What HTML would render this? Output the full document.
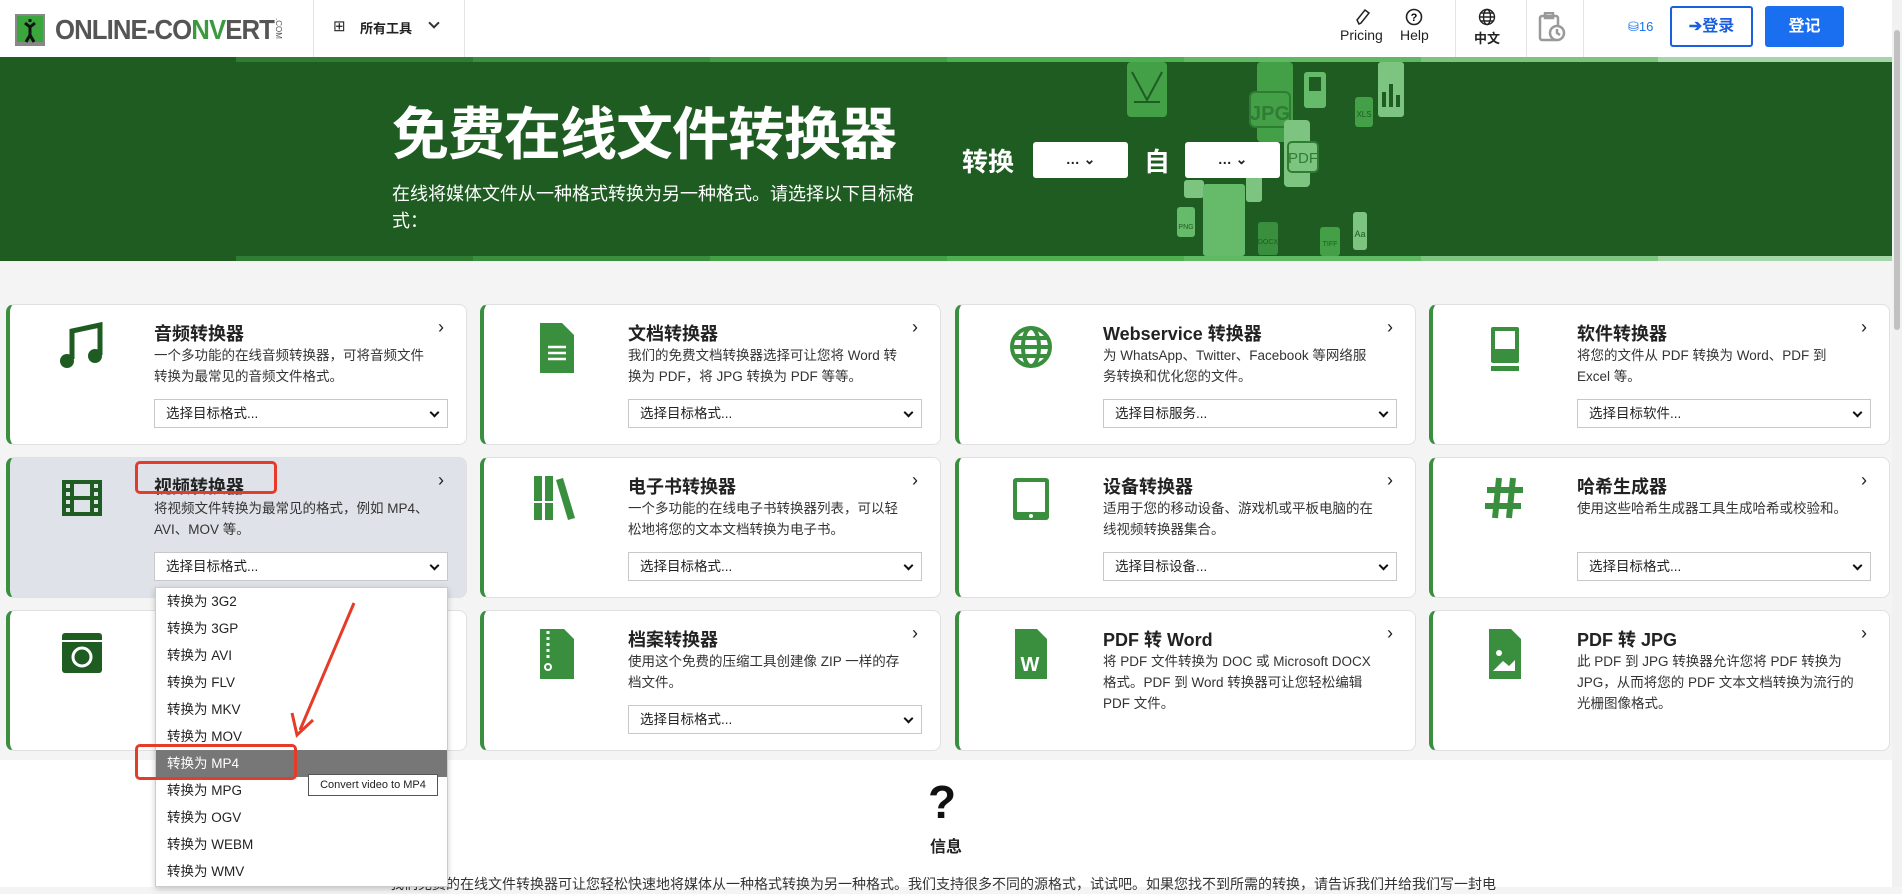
<!DOCTYPE html>
<html><head><meta charset="utf-8"><style>
*{margin:0;padding:0;box-sizing:border-box}
body{width:1902px;height:887px;overflow:hidden;background:#f4f4f4;font-family:"Liberation Sans","Noto Sans CJK SC",sans-serif;position:relative;color:#222}
.a{position:absolute}
.hdr{left:0;top:0;width:1892px;height:57px;background:#fff}
.sep{top:0;width:1px;height:57px;background:#e4e4e4}
.ban{left:0;top:57px;width:1892px;height:204px;background:#1e5c22;overflow:hidden}
.card{position:absolute;width:461px;height:141px;background:#fff;border:1px solid #e0e0e0;border-left:4px solid #3a8f3e;border-radius:8px}
.card h3{position:absolute;left:144px;top:15px;font-size:18px;font-weight:bold;color:#222;white-space:nowrap}
.card p{position:absolute;left:144px;top:40px;font-size:13.5px;line-height:21px;color:#333;white-space:nowrap}
.card .chev{position:absolute;right:22px;top:12px;font-size:18px;color:#222}
.sel{position:absolute;left:144px;top:94px;width:294px;height:29px;background:#fff;border:1px solid #c8c8c8;font-size:13.5px;line-height:27px;padding-left:11px;color:#222}
.sel:after{content:"";position:absolute;right:9px;top:9px;width:5px;height:5px;border-right:2px solid #111;border-bottom:2px solid #111;transform:rotate(45deg)}
.ic{position:absolute;left:44px;top:14px;width:56px;height:56px}
.dd{left:155px;top:587px;width:293px;height:300px;background:#fff;border:1px solid #ccc;box-shadow:0 2px 6px rgba(0,0,0,.2)}
.dd div{height:27px;line-height:27px;padding-left:11px;font-size:13.5px;color:#222}
.red{border:3px solid #e53c2a;border-radius:5px}
</style></head><body>
<div class="a hdr"></div>
<svg class="a" style="left:15px;top:14px" width="30" height="32"><rect width="30" height="32" fill="#888"/><rect x="2" y="2" width="26" height="26" fill="#3ba63e"/><path d="M15 5v3M10 9l5 4 5-4M15 13v8l-4 7M15 21l4 7" stroke="#111" stroke-width="3" fill="none"/></svg>
<div class="a" style="left:55px;top:14px;font-size:28px;font-weight:bold;color:#555;letter-spacing:-1px;transform:scaleX(.92);transform-origin:left;white-space:nowrap">ONLINE-CO<span style="color:#3a9a3e">NV</span>ERT</div>
<div class="a" style="left:268px;top:24px;font-size:8px;color:#555;transform:rotate(90deg)">.COM</div>
<div class="a sep" style="left:313px"></div><div class="a sep" style="left:464px"></div>
<div class="a" style="left:333px;top:17px;font-size:15px;color:#222">⊞</div>
<div class="a" style="left:360px;top:18px;font-size:13px;font-weight:bold">所有工具</div>
<div class="a" style="left:430px;top:19px;width:8px;height:8px;border-right:2px solid #333;border-bottom:2px solid #333;transform:rotate(45deg)"></div>
<svg class="a" style="left:1355px;top:8px" width="16" height="18"><path d="M4 16l-2-4 8-10 4 3-8 10z" fill="none" stroke="#222" stroke-width="1.5"/></svg>
<div class="a" style="left:1340px;top:27px;font-size:14px">Pricing</div>
<svg class="a" style="left:1405px;top:8px" width="18" height="18"><circle cx="9" cy="9" r="7.5" fill="none" stroke="#222" stroke-width="1.6"/><text x="9" y="13" font-size="11" text-anchor="middle" font-family="Liberation Sans" font-weight="bold">?</text></svg>
<div class="a" style="left:1400px;top:27px;font-size:14px">Help</div>
<div class="a sep" style="left:1455px"></div>
<svg class="a" style="left:1478px;top:8px" width="18" height="18" fill="none" stroke="#222" stroke-width="1.4"><circle cx="9" cy="9" r="7.5"/><ellipse cx="9" cy="9" rx="3.5" ry="7.5"/><path d="M1.5 9h15M3 5h12M3 13h12"/></svg>
<div class="a" style="left:1474px;top:28px;font-size:13px;font-weight:bold">中文</div>
<div class="a sep" style="left:1526px"></div>
<svg class="a" style="left:1538px;top:12px" width="28" height="30" fill="none" stroke="#999" stroke-width="2.5"><rect x="2" y="4" width="18" height="24" rx="2"/><rect x="7" y="1" width="8" height="5"/><circle cx="19" cy="21" r="7" fill="#fff"/><path d="M19 17v4l3 2"/></svg>
<div class="a sep" style="left:1583px"></div>
<div class="a" style="left:1628px;top:19px;font-size:13px;color:#1a73e8">⛁16</div>
<div class="a" style="left:1670px;top:6px;width:83px;height:41px;border:2px solid #1a5fe0;border-radius:3px;color:#1a5fe0;font-size:16px;font-weight:bold;text-align:center;line-height:37px">➔登录</div>
<div class="a" style="left:1765px;top:6px;width:79px;height:41px;background:#1a6ef0;border-radius:3px;color:#fff;font-size:16px;font-weight:bold;text-align:center;line-height:41px">登记</div>
<div class="a" style="left:1892px;top:0;width:10px;height:887px;background:#f1f1f1"></div>
<div class="a" style="left:1894px;top:30px;width:6px;height:300px;background:#c1c1c1;border-radius:3px"></div>

<div class="a ban">
<div class="a" style="left:236px;top:0;width:237px;height:5px;background:#2f7d33"></div>
<div class="a" style="left:473px;top:0;width:237px;height:5px;background:#3a8f3e"></div>
<div class="a" style="left:710px;top:0;width:237px;height:5px;background:#43a047"></div>
<div class="a" style="left:947px;top:0;width:237px;height:5px;background:#4caf50"></div>
<div class="a" style="left:1184px;top:0;width:237px;height:5px;background:#5fb862"></div>
<div class="a" style="left:1421px;top:0;width:237px;height:5px;background:#7cc47f"></div>
<div class="a" style="left:1658px;top:0;width:234px;height:5px;background:#a5d6a7"></div>
<div class="a" style="left:236px;top:199px;width:237px;height:5px;background:#2f7d33"></div>
<div class="a" style="left:473px;top:199px;width:237px;height:5px;background:#3a8f3e"></div>
<div class="a" style="left:710px;top:199px;width:237px;height:5px;background:#43a047"></div>
<div class="a" style="left:947px;top:199px;width:237px;height:5px;background:#4caf50"></div>
<div class="a" style="left:1184px;top:199px;width:237px;height:5px;background:#5fb862"></div>
<div class="a" style="left:1421px;top:199px;width:237px;height:5px;background:#7cc47f"></div>
<div class="a" style="left:1658px;top:199px;width:234px;height:5px;background:#a5d6a7"></div>
<svg class="a" style="left:1110px;top:5px" width="340" height="194">
<rect x="17" y="0" width="40" height="55" rx="4" fill="#43a047"/><path d="M22 10l15 28 15-28M24 40h26" stroke="#1e5c22" stroke-width="2" fill="none"/>
<rect x="147" y="0" width="36" height="80" rx="4" fill="#43a047"/>
<rect x="140" y="30" width="40" height="35" rx="5" fill="#43a047" stroke="#2f7d33" stroke-width="2"/><text x="160" y="58" font-size="20" text-anchor="middle" fill="#2f7d33" font-family="Liberation Sans" font-weight="bold">JPG</text>
<rect x="194" y="10" width="22" height="36" rx="3" fill="#66bb6a"/><rect x="199" y="15" width="12" height="14" fill="#1e5c22"/>
<rect x="245" y="35" width="18" height="30" rx="3" fill="#43a047"/><text x="254" y="55" font-size="8" text-anchor="middle" fill="#1e5c22">XLS</text>
<rect x="268" y="0" width="26" height="55" rx="3" fill="#7cc47f"/><rect x="272" y="30" width="4" height="15" fill="#1e5c22"/><rect x="279" y="22" width="4" height="23" fill="#1e5c22"/><rect x="286" y="33" width="4" height="12" fill="#1e5c22"/>
<rect x="174" y="58" width="26" height="67" rx="4" fill="#7cc47f"/><rect x="178" y="80" width="30" height="30" rx="4" fill="#7cc47f" stroke="#2f7d33" stroke-width="2"/><text x="193" y="101" font-size="15" text-anchor="middle" fill="#2f7d33">PDF</text>
<rect x="136" y="107" width="16" height="33" rx="3" fill="#7cc47f"/>
<rect x="74" y="118" width="20" height="18" rx="3" fill="#7cc47f"/>
<rect x="93" y="122" width="42" height="72" rx="3" fill="#66bb6a"/>
<rect x="67" y="145" width="18" height="30" rx="3" fill="#66bb6a"/><text x="76" y="167" font-size="7" text-anchor="middle" fill="#1e5c22">PNG</text>
<rect x="148" y="160" width="20" height="33" rx="3" fill="#3a8f3e"/><text x="158" y="182" font-size="7" text-anchor="middle" fill="#1e5c22">DOCX</text>
<rect x="210" y="165" width="20" height="29" rx="3" fill="#43a047"/><text x="220" y="184" font-size="7" text-anchor="middle" fill="#1e5c22">TIFF</text>
<rect x="243" y="150" width="14" height="38" rx="3" fill="#7cc47f"/><text x="250" y="175" font-size="9" text-anchor="middle" fill="#1e5c22">Aa</text>
</svg>
<div class="a" style="left:392px;top:32px;font-size:57px;font-weight:bold;color:#fff;white-space:nowrap;letter-spacing:-1px">免费在线文件转换器</div>
<div class="a" style="left:392px;top:124px;width:524px;font-size:18px;line-height:27px;color:#fff">在线将媒体文件从一种格式转换为另一种格式。请选择以下目标格式：</div>
<div class="a" style="left:962px;top:85px;font-size:26px;font-weight:bold;color:#fff">转换</div>
<div class="a" style="left:1033px;top:85px;width:95px;height:36px;background:#fff;border-radius:3px;font-size:14px;text-align:center;line-height:34px;font-weight:bold">… ⌄</div>
<div class="a" style="left:1144px;top:85px;font-size:26px;font-weight:bold;color:#fff">自</div>
<div class="a" style="left:1185px;top:85px;width:95px;height:36px;background:#fff;border-radius:3px;font-size:14px;text-align:center;line-height:34px;font-weight:bold">… ⌄</div>
</div>

<!-- row 1 -->
<div class="card" style="left:6px;top:304px"><svg class="ic" viewBox="0 0 56 56"><path d="M18 40V12l28-6v30" stroke="#1e5c22" stroke-width="5" fill="none"/><circle cx="13" cy="42" r="7" fill="#1e5c22"/><circle cx="41" cy="37" r="7" fill="#1e5c22"/></svg><h3>音频转换器</h3><span class="chev">›</span><p>一个多功能的在线音频转换器，可将音频文件<br>转换为最常见的音频文件格式。</p><div class="sel">选择目标格式...</div></div>
<div class="card" style="left:480px;top:304px"><svg class="ic" viewBox="0 0 56 56"><path d="M12 4h22l12 12v38H12z" fill="#3a8f3e"/><path d="M20 28h18M20 34h18M20 40h18" stroke="#fff" stroke-width="2.5"/></svg><h3>文档转换器</h3><span class="chev">›</span><p>我们的免费文档转换器选择可让您将 Word 转<br>换为 PDF，将 JPG 转换为 PDF 等等。</p><div class="sel">选择目标格式...</div></div>
<div class="card" style="left:955px;top:304px"><svg class="ic" viewBox="0 0 56 56" fill="none" stroke="#3a8f3e" stroke-width="4"><circle cx="28" cy="28" r="19"/><ellipse cx="28" cy="28" rx="8" ry="19"/><path d="M9 28h38M12 19h32M12 37h32"/></svg><h3>Webservice 转换器</h3><span class="chev">›</span><p>为 WhatsApp、Twitter、Facebook 等网络服<br>务转换和优化您的文件。</p><div class="sel">选择目标服务...</div></div>
<div class="card" style="left:1429px;top:304px"><svg class="ic" viewBox="0 0 56 56"><rect x="14" y="8" width="28" height="36" rx="2" fill="#3a8f3e"/><rect x="18" y="12" width="20" height="18" fill="#fff"/><rect x="14" y="47" width="28" height="5" fill="#3a8f3e"/></svg><h3>软件转换器</h3><span class="chev">›</span><p>将您的文件从 PDF 转换为 Word、PDF 到<br>Excel 等。</p><div class="sel">选择目标软件...</div></div>
<!-- row 2 -->
<div class="card" style="left:6px;top:457px;background:#dfe2e8"><svg class="ic" viewBox="0 0 56 56"><rect x="10" y="10" width="36" height="32" fill="none" stroke="#1e5c22" stroke-width="4"/><path d="M18 10v32M38 10v32M10 26h36M10 18h8M10 34h8M38 18h8M38 34h8" stroke="#1e5c22" stroke-width="4"/></svg><h3>视频转换器</h3><span class="chev">›</span><p>将视频文件转换为最常见的格式，例如 MP4、<br>AVI、MOV 等。</p><div class="sel">选择目标格式...</div></div>
<div class="card" style="left:480px;top:457px"><svg class="ic" viewBox="0 0 56 56"><rect x="6" y="4" width="8" height="44" fill="#3a8f3e"/><rect x="17" y="4" width="8" height="44" fill="#3a8f3e"/><path d="M28 8l7-2 12 40-7 2z" fill="#3a8f3e"/><path d="M6 30h19" stroke="#fff" stroke-width="2"/></svg><h3>电子书转换器</h3><span class="chev">›</span><p>一个多功能的在线电子书转换器列表，可以轻<br>松地将您的文本文档转换为电子书。</p><div class="sel">选择目标格式...</div></div>
<div class="card" style="left:955px;top:457px"><svg class="ic" viewBox="0 0 56 56"><rect x="10" y="6" width="36" height="42" rx="3" fill="#3a8f3e"/><rect x="14" y="10" width="28" height="30" fill="#fff"/><circle cx="28" cy="44" r="2" fill="#fff"/></svg><h3>设备转换器</h3><span class="chev">›</span><p>适用于您的移动设备、游戏机或平板电脑的在<br>线视频转换器集合。</p><div class="sel">选择目标设备...</div></div>
<div class="card" style="left:1429px;top:457px"><svg class="ic" viewBox="0 0 56 56"><path d="M22 6l-4 40M36 6l-4 40M10 18h36M8 34h36" stroke="#3a8f3e" stroke-width="6"/></svg><h3>哈希生成器</h3><span class="chev">›</span><p>使用这些哈希生成器工具生成哈希或校验和。</p><div class="sel">选择目标格式...</div></div>
<!-- row 3 -->
<div class="card" style="left:6px;top:610px"><svg class="ic" viewBox="0 0 56 56"><rect x="8" y="8" width="40" height="40" rx="3" fill="#1e5c22"/><path d="M8 16h40" stroke="#fff" stroke-width="2"/><circle cx="28" cy="32" r="9" fill="none" stroke="#fff" stroke-width="3"/></svg></div>
<div class="card" style="left:480px;top:610px"><svg class="ic" viewBox="0 0 56 56"><path d="M12 4h24l10 10v40H12z" fill="#3a8f3e"/><path d="M20 6v30" stroke="#fff" stroke-width="3" stroke-dasharray="3 3"/><circle cx="20" cy="42" r="3" fill="none" stroke="#fff" stroke-width="2"/></svg><h3>档案转换器</h3><span class="chev">›</span><p>使用这个免费的压缩工具创建像 ZIP 一样的存<br>档文件。</p><div class="sel">选择目标格式...</div></div>
<div class="card" style="left:955px;top:610px"><svg class="ic" viewBox="0 0 56 56"><path d="M12 4h22l10 10v40H12z" fill="#3a8f3e"/><text x="27" y="46" font-size="20" font-weight="bold" fill="#fff" text-anchor="middle" font-family="Liberation Sans">W</text></svg><h3>PDF 转 Word</h3><span class="chev">›</span><p>将 PDF 文件转换为 DOC 或 Microsoft DOCX<br>格式。PDF 到 Word 转换器可让您轻松编辑<br>PDF 文件。</p></div>
<div class="card" style="left:1429px;top:610px"><svg class="ic" viewBox="0 0 56 56"><path d="M12 4h22l10 10v40H12z" fill="#3a8f3e"/><circle cx="22" cy="28" r="3" fill="#fff"/><path d="M16 46l10-10 6 5 6-6v11z" fill="#fff"/></svg><h3>PDF 转 JPG</h3><span class="chev">›</span><p>此 PDF 到 JPG 转换器允许您将 PDF 转换为<br>JPG，从而将您的 PDF 文本文档转换为流行的<br>光栅图像格式。</p></div>

<div class="a" style="left:0;top:760px;width:1892px;height:127px;background:#fff"></div>
<div class="a" style="left:928px;top:775px;font-size:46px;font-weight:bold;color:#111">?</div>
<div class="a" style="left:930px;top:833px;font-size:16px;font-weight:bold">信息</div>
<div class="a" style="left:390px;top:874px;font-size:14px;color:#333;white-space:nowrap">我们免费的在线文件转换器可让您轻松快速地将媒体从一种格式转换为另一种格式。我们支持很多不同的源格式，试试吧。如果您找不到所需的转换，请告诉我们并给我们写一封电</div>

<div class="a dd">
<div>转换为 3G2</div><div>转换为 3GP</div><div>转换为 AVI</div><div>转换为 FLV</div><div>转换为 MKV</div><div>转换为 MOV</div><div style="background:#777;color:#fff">转换为 MP4</div><div>转换为 MPG</div><div>转换为 OGV</div><div>转换为 WEBM</div><div>转换为 WMV</div>
</div>
<div class="a" style="left:308px;top:774px;width:130px;height:22px;background:#fff;border:1px solid #555;font-size:11px;line-height:20px;text-align:center">Convert video to MP4</div>
<div class="a red" style="left:135px;top:461px;width:142px;height:33px"></div>
<div class="a red" style="left:135px;top:744px;width:162px;height:36px"></div>
<svg class="a" style="left:280px;top:595px" width="90" height="150"><path d="M74 8L20 135" stroke="#e53c2a" stroke-width="3"/><path d="M12 118l5 22 16-15" stroke="#e53c2a" stroke-width="3" fill="none"/></svg>
</body></html>
